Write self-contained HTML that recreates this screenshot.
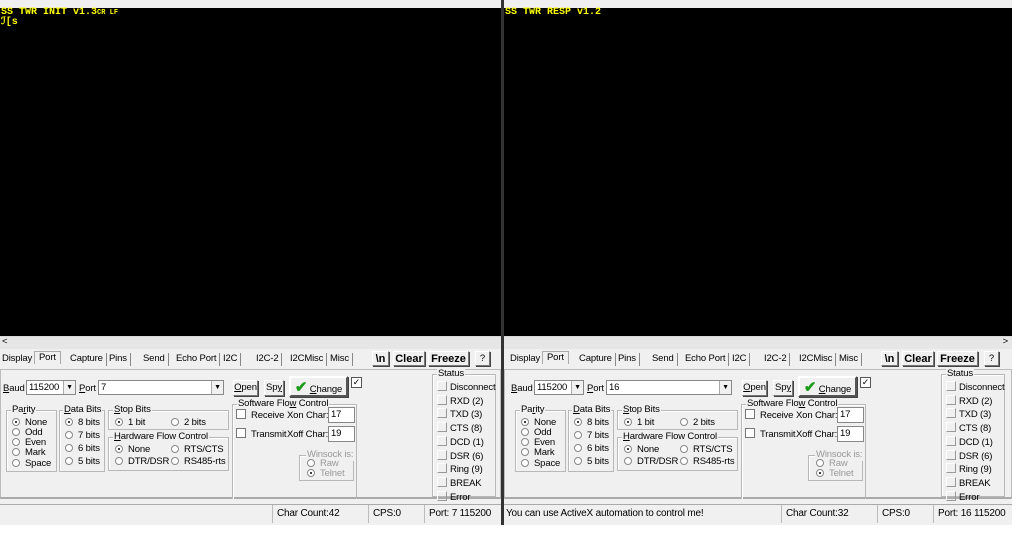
<!DOCTYPE html>
<html><head><meta charset="utf-8">
<style>
*{margin:0;padding:0;box-sizing:border-box}
body{width:1024px;height:536px;background:#fff;position:relative;overflow:hidden;font-family:"Liberation Sans",Arial,sans-serif;font-size:9.5px;letter-spacing:-0.15px;color:#000}
.a{position:absolute}
.win{position:absolute;top:0;height:525px;background:#f0f0f0}
.term{position:absolute;left:0;right:0;top:8px;height:328px;background:#000;font-family:"Liberation Mono",monospace;font-weight:bold;font-size:10px;letter-spacing:0;color:#ffff00;line-height:10px;padding-left:1px}
.hs{position:absolute;left:0;right:0;top:336px;height:13px;background:#e6e6e6;border-top:1px solid #d8d8d8}
.tabs{position:absolute;left:0;right:0;top:349px;height:20px;background:#f0f0f0}
.tab{position:absolute;top:4px;border-right:1px solid #888;padding-right:3px;height:13px;white-space:nowrap}
.btn{position:absolute;border:1px solid #777;border-top-color:#fff;border-left-color:#fff;box-shadow:1px 1px 0 #444;background:#f0f0f0;text-align:center;line-height:14px;white-space:nowrap}
.bb{font-weight:bold;font-size:11px;letter-spacing:0}
.panel{position:absolute;left:0;right:0;top:369px;height:130px;border:1px solid #bbb;border-bottom:2px solid #aaa;background:#f0f0f0}
.inp{position:absolute;background:#fff;border:1px solid #888;line-height:13px;padding-left:2px}
.arr{position:absolute;right:0;top:0;width:12px;height:100%;background:#f0f0f0;border-left:1px solid #aaa;font-size:7px;text-align:center;line-height:13px}
.grp{position:absolute;border:1px solid #b8b8b8;box-shadow:inset 1px 1px 0 #fff}
.gl{position:absolute;top:-7px;left:4px;background:#f0f0f0;padding:0 1px;line-height:12px;white-space:nowrap}
.r{position:absolute;line-height:12px;white-space:nowrap}
.r i{display:inline-block;width:8px;height:8px;border:1px solid #888;border-radius:50%;background:#fff;margin-right:5px;vertical-align:-1px;position:relative}
.r i.on::after{content:"";position:absolute;left:2px;top:2px;width:2px;height:2px;background:#000;border-radius:50%}
.cb{display:inline-block;width:10px;height:10px;border:1px solid #777;background:#fff;margin-right:5px;vertical-align:-1px}
.st{position:absolute;line-height:12.7px;white-space:nowrap}
.st b{font-weight:normal;display:inline-block;width:10px;height:10px;border:1px solid #999;border-top-color:#fff;border-left-color:#fff;margin-right:3px;vertical-align:-1px}
.sb{position:absolute;left:0;right:0;top:504px;height:19px;border-top:1px solid #aaa;background:#f0f0f0;line-height:18px;font-size:10px;letter-spacing:-0.2px}
.sb span{position:absolute;top:0;height:18px;border-left:1px solid #bbb;padding-left:4px;white-space:nowrap}
.gray{color:#999}
</style></head><body>

<!-- LEFT WINDOW -->
<div class="win" style="left:0;width:501px">
 <div class="term">SS TWR INIT v1.3<span style="font-size:7px">CR LF</span><br>&#8464;[s</div>
 <div class="hs"><span class="a" style="left:2px;top:-1px">&lt;</span></div>
 <div class="tabs">
  <span class="tab" style="left:2px;border:none">Display</span>
  <span class="tab" style="left:34px;top:2px;border:1px solid #aaa;border-bottom:none;padding:0 4px;background:#f0f0f0">Port</span>
  <span class="tab" style="left:70px">Capture</span>
  <span class="tab" style="left:109px">Pins</span>
  <span class="tab" style="left:143px">Send</span>
  <span class="tab" style="left:176px">Echo Port</span>
  <span class="tab" style="left:223px">I2C</span>
  <span class="tab" style="left:256px">I2C-2</span>
  <span class="tab" style="left:290px">I2CMisc</span>
  <span class="tab" style="left:330px">Misc</span>
  <div class="btn bb" style="left:372px;top:2px;width:17px;height:15px">\n</div>
  <div class="btn bb" style="left:393px;top:2px;width:32px;height:15px">Clear</div>
  <div class="btn bb" style="left:428px;top:2px;width:41px;height:15px">Freeze</div>
  <div class="btn" style="left:475px;top:2px;width:15px;height:15px">?</div>
 </div>
 <div class="panel"></div>
 <span class="r" style="left:3px;top:383px"><u>B</u>aud</span>
 <div class="inp" style="left:26px;top:380px;width:50px;height:15px">115200<div class="arr">&#9660;</div></div>
 <span class="r" style="left:79px;top:383px"><u>P</u>ort</span>
 <div class="inp" style="left:98px;top:380px;width:126px;height:15px">7<div class="arr">&#9660;</div></div>
 <div class="btn" style="left:233px;top:380px;width:25px;height:16px"><u>O</u>pen</div>
 <div class="btn" style="left:264px;top:380px;width:20px;height:16px">Sp<u>y</u></div>
 <div class="btn" style="left:289px;top:376px;width:59px;height:21px;line-height:20px;border:2px solid #555;border-top-color:#fff;border-left-color:#fff"><span style="color:#1a9c1a;font-size:15px;font-weight:bold">&#10004;</span> <u>C</u>hange</div>
 <div class="a" style="left:351px;top:377px;width:11px;height:11px;border:1px solid #555;background:#fff;font-size:9px;line-height:9px;text-align:center">&#10003;</div>

 <div class="grp" style="left:6px;top:410px;width:51px;height:62px"><span class="gl">Pa<u>r</u>ity</span></div>
 <span class="r" style="left:12px;top:417px"><i class="on"></i>None</span>
 <span class="r" style="left:12px;top:427px"><i></i>Odd</span>
 <span class="r" style="left:12px;top:437px"><i></i>Even</span>
 <span class="r" style="left:12px;top:447px"><i></i>Mark</span>
 <span class="r" style="left:12px;top:458px"><i></i>Space</span>
 <div class="grp" style="left:59px;top:410px;width:46px;height:62px"><span class="gl" style="left:3px"><u>D</u>ata Bits</span></div>
 <span class="r" style="left:65px;top:417px"><i class="on"></i>8 bits</span>
 <span class="r" style="left:65px;top:430px"><i></i>7 bits</span>
 <span class="r" style="left:65px;top:443px"><i></i>6 bits</span>
 <span class="r" style="left:65px;top:456px"><i></i>5 bits</span>
 <div class="grp" style="left:108px;top:410px;width:121px;height:20px"><span class="gl"><u>S</u>top Bits</span></div>
 <span class="r" style="left:115px;top:417px"><i class="on"></i>1 bit</span>
 <span class="r" style="left:171px;top:417px"><i></i>2 bits</span>
 <div class="grp" style="left:108px;top:437px;width:121px;height:34px"><span class="gl"><u>H</u>ardware Flow Control</span></div>
 <span class="r" style="left:115px;top:444px"><i class="on"></i>None</span>
 <span class="r" style="left:171px;top:444px"><i></i>RTS/CTS</span>
 <span class="r" style="left:115px;top:456px"><i></i>DTR/DSR</span>
 <span class="r" style="left:171px;top:456px"><i></i>RS485-rts</span>
 <div class="grp" style="left:232px;top:404px;width:125px;height:95px;border-bottom:none"><span class="gl">Software Flo<u>w</u> Control</span></div>
 <span class="r" style="left:236px;top:409px"><span class="cb"></span>Receive</span>
 <span class="r" style="left:287px;top:410px">Xon Char:</span>
 <div class="inp" style="left:328px;top:407px;width:27px;height:16px">17</div>
 <span class="r" style="left:236px;top:428px"><span class="cb"></span>Transmit</span>
 <span class="r" style="left:287px;top:429px">Xoff Char:</span>
 <div class="inp" style="left:328px;top:426px;width:27px;height:16px">19</div>
 <div class="grp" style="left:299px;top:455px;width:55px;height:26px"><span class="gl gray" style="left:6px">Winsock is:</span></div>
 <span class="r gray" style="left:307px;top:459px;line-height:10px"><i></i>Raw</span>
 <span class="r gray" style="left:307px;top:469px;line-height:10px"><i class="on"></i>Telnet</span>
 <div class="grp" style="left:432px;top:374px;width:64px;height:123px"><span class="gl">Status</span></div>
 <div class="st" style="left:437px;top:381px">
  <div><b></b>Disconnect</div><div><b></b>RXD (2)</div><div><b></b>TXD (3)</div><div><b></b>CTS (8)</div><div><b></b>DCD (1)</div><div><b></b>DSR (6)</div><div><b></b>Ring (9)</div><div><b></b>BREAK</div><div><b></b>Error</div>
 </div>
 <div class="sb">
  <span style="left:272px;width:96px">Char Count:42</span>
  <span style="left:368px;width:56px">CPS:0</span>
  <span style="left:424px;width:77px">Port: 7 115200</span>
 </div>
</div>

<div class="a" style="left:501px;top:0;width:3px;height:525px;background:#333"></div>

<!-- RIGHT WINDOW -->
<div class="win" style="left:504px;width:508px">
 <div class="term">SS TWR RESP v1.2</div>
 <div class="hs"><span class="a" style="right:4px;top:-1px">&gt;</span></div>
 <div class="tabs">
  <span class="tab" style="left:6px;border:none">Display</span>
  <span class="tab" style="left:38px;top:2px;border:1px solid #aaa;border-bottom:none;padding:0 4px;background:#f0f0f0">Port</span>
  <span class="tab" style="left:75px">Capture</span>
  <span class="tab" style="left:114px">Pins</span>
  <span class="tab" style="left:148px">Send</span>
  <span class="tab" style="left:181px">Echo Port</span>
  <span class="tab" style="left:228px">I2C</span>
  <span class="tab" style="left:260px">I2C-2</span>
  <span class="tab" style="left:295px">I2CMisc</span>
  <span class="tab" style="left:335px">Misc</span>
  <div class="btn bb" style="left:377px;top:2px;width:17px;height:15px">\n</div>
  <div class="btn bb" style="left:398px;top:2px;width:32px;height:15px">Clear</div>
  <div class="btn bb" style="left:433px;top:2px;width:41px;height:15px">Freeze</div>
  <div class="btn" style="left:480px;top:2px;width:15px;height:15px">?</div>
 </div>
 <div class="panel"></div>
 <span class="r" style="left:7px;top:383px"><u>B</u>aud</span>
 <div class="inp" style="left:30px;top:380px;width:50px;height:15px">115200<div class="arr">&#9660;</div></div>
 <span class="r" style="left:83px;top:383px"><u>P</u>ort</span>
 <div class="inp" style="left:102px;top:380px;width:126px;height:15px">16<div class="arr">&#9660;</div></div>
 <div class="btn" style="left:238px;top:380px;width:25px;height:16px"><u>O</u>pen</div>
 <div class="btn" style="left:269px;top:380px;width:20px;height:16px">Sp<u>y</u></div>
 <div class="btn" style="left:294px;top:376px;width:59px;height:21px;line-height:20px;border:2px solid #555;border-top-color:#fff;border-left-color:#fff"><span style="color:#1a9c1a;font-size:15px;font-weight:bold">&#10004;</span> <u>C</u>hange</div>
 <div class="a" style="left:356px;top:377px;width:11px;height:11px;border:1px solid #555;background:#fff;font-size:9px;line-height:9px;text-align:center">&#10003;</div>

 <div class="grp" style="left:11px;top:410px;width:51px;height:62px"><span class="gl">Pa<u>r</u>ity</span></div>
 <span class="r" style="left:17px;top:417px"><i class="on"></i>None</span>
 <span class="r" style="left:17px;top:427px"><i></i>Odd</span>
 <span class="r" style="left:17px;top:437px"><i></i>Even</span>
 <span class="r" style="left:17px;top:447px"><i></i>Mark</span>
 <span class="r" style="left:17px;top:458px"><i></i>Space</span>
 <div class="grp" style="left:64px;top:410px;width:46px;height:62px"><span class="gl" style="left:3px"><u>D</u>ata Bits</span></div>
 <span class="r" style="left:70px;top:417px"><i class="on"></i>8 bits</span>
 <span class="r" style="left:70px;top:430px"><i></i>7 bits</span>
 <span class="r" style="left:70px;top:443px"><i></i>6 bits</span>
 <span class="r" style="left:70px;top:456px"><i></i>5 bits</span>
 <div class="grp" style="left:113px;top:410px;width:121px;height:20px"><span class="gl"><u>S</u>top Bits</span></div>
 <span class="r" style="left:120px;top:417px"><i class="on"></i>1 bit</span>
 <span class="r" style="left:176px;top:417px"><i></i>2 bits</span>
 <div class="grp" style="left:113px;top:437px;width:121px;height:34px"><span class="gl"><u>H</u>ardware Flow Control</span></div>
 <span class="r" style="left:120px;top:444px"><i class="on"></i>None</span>
 <span class="r" style="left:176px;top:444px"><i></i>RTS/CTS</span>
 <span class="r" style="left:120px;top:456px"><i></i>DTR/DSR</span>
 <span class="r" style="left:176px;top:456px"><i></i>RS485-rts</span>
 <div class="grp" style="left:237px;top:404px;width:125px;height:95px;border-bottom:none"><span class="gl">Software Flo<u>w</u> Control</span></div>
 <span class="r" style="left:241px;top:409px"><span class="cb"></span>Receive</span>
 <span class="r" style="left:292px;top:410px">Xon Char:</span>
 <div class="inp" style="left:333px;top:407px;width:27px;height:16px">17</div>
 <span class="r" style="left:241px;top:428px"><span class="cb"></span>Transmit</span>
 <span class="r" style="left:292px;top:429px">Xoff Char:</span>
 <div class="inp" style="left:333px;top:426px;width:27px;height:16px">19</div>
 <div class="grp" style="left:304px;top:455px;width:55px;height:26px"><span class="gl gray" style="left:6px">Winsock is:</span></div>
 <span class="r gray" style="left:312px;top:459px;line-height:10px"><i></i>Raw</span>
 <span class="r gray" style="left:312px;top:469px;line-height:10px"><i class="on"></i>Telnet</span>
 <div class="grp" style="left:437px;top:374px;width:64px;height:123px"><span class="gl">Status</span></div>
 <div class="st" style="left:442px;top:381px">
  <div><b></b>Disconnect</div><div><b></b>RXD (2)</div><div><b></b>TXD (3)</div><div><b></b>CTS (8)</div><div><b></b>DCD (1)</div><div><b></b>DSR (6)</div><div><b></b>Ring (9)</div><div><b></b>BREAK</div><div><b></b>Error</div>
 </div>
 <div class="sb">
  <span style="left:0;width:277px;border-left:none;padding-left:2px">You can use ActiveX automation to control me!</span>
  <span style="left:277px;width:96px">Char Count:32</span>
  <span style="left:373px;width:56px">CPS:0</span>
  <span style="left:429px;width:79px;overflow:hidden">Port: 16 115200</span>
 </div>
</div>
</body></html>
